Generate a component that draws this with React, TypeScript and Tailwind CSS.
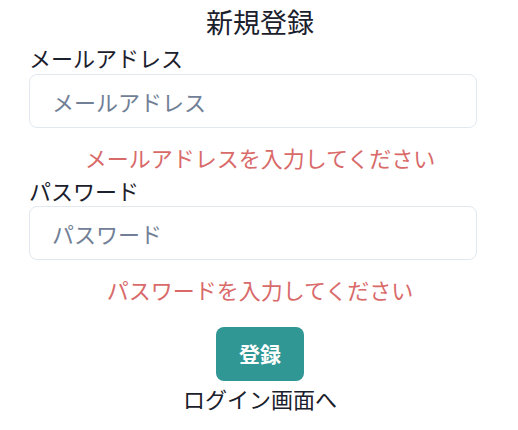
import { useState } from "react";

export default function App() {
  const [email, setEmail] = useState("");
  const [password, setPassword] = useState("");

  return (
    <div
      className="w-[518px] h-[430px] bg-white text-[#1a202c] overflow-hidden"
      style={{ fontFamily: '"Noto Sans CJK JP", "Noto Sans", sans-serif' }}
    >
      <div className="flex flex-col pt-[4px] pl-[29px] w-[477px]">
        <h1 className="text-center text-[27px] leading-[36px] pl-[14px]">新規登録</h1>

        <label className="text-[22px] leading-[34px]">メールアドレス</label>
        <input
          type="email"
          value={email}
          onChange={(e) => setEmail(e.target.value)}
          placeholder="メールアドレス"
          className="h-[54px] w-[448px] rounded-[8px] border border-[#e2e8f0] px-[22px] text-[22px] placeholder:text-[#718096] outline-none"
        />
        <p className="mt-[12px] text-center text-[22px] leading-[34px] text-[#d96a6a] pl-[14px]">
          メールアドレスを入力してください
        </p>

        <label className="text-[22px] leading-[32px]">パスワード</label>
        <input
          type="password"
          value={password}
          onChange={(e) => setPassword(e.target.value)}
          placeholder="パスワード"
          className="h-[54px] w-[448px] rounded-[8px] border border-[#e2e8f0] px-[22px] text-[22px] placeholder:text-[#718096] outline-none"
        />
        <p className="mt-[12px] text-center text-[22px] leading-[34px] text-[#d96a6a] pl-[14px]">
          パスワードを入力してください
        </p>

        <div className="flex flex-col items-center pl-[14px] mt-[21px]">
          <button className="h-[54px] w-[88px] rounded-[8px] bg-[#319795] text-white text-[21px] font-bold">
            登録
          </button>
          <a className="text-[22px] leading-[34px] cursor-pointer">ログイン画面へ</a>
        </div>
      </div>
    </div>
  );
}
